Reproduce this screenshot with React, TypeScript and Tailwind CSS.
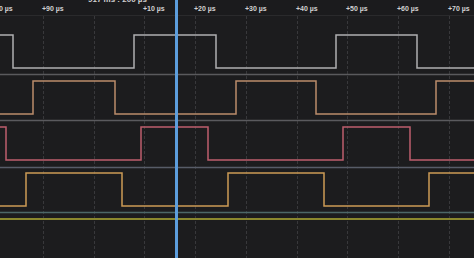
import React from 'react';

const ticks = [-8, 43, 94, 144, 195, 246, 297, 347, 398, 449];

const labels = [
  { x: -9, text: '+80 µs' },
  { x: 42, text: '+90 µs' },
  { x: 143, text: '+10 µs' },
  { x: 194, text: '+20 µs' },
  { x: 245, text: '+30 µs' },
  { x: 296, text: '+40 µs' },
  { x: 346, text: '+50 µs' },
  { x: 397, text: '+60 µs' },
  { x: 448, text: '+70 µs' },
];

// each signal: color, high y, low y, start level, edge x positions
const signals = [
  { color: '#afafb1', hi: 35, lo: 68, start: 1, edges: [13, 134, 216, 336, 417] },
  { color: '#bb8c6b', hi: 81, lo: 114, start: 0, edges: [33, 115, 236, 316, 436] },
  { color: '#bd5d6d', hi: 127, lo: 160, start: 1, edges: [6, 141, 208, 343, 410] },
  { color: '#cc9a55', hi: 173, lo: 206, start: 0, edges: [26, 122, 228, 324, 429] },
];

const separators = [
  { y: 74, color: '#5a5a5d' },
  { y: 120, color: '#5a5a5e' },
  { y: 167, color: '#575c68' },
  { y: 212, color: '#4c6768' },
];

function wavePath(s: (typeof signals)[number]) {
  let level = s.start;
  let d = `M0 ${level ? s.hi : s.lo}`;
  for (const x of s.edges) {
    d += ` H${x}`;
    level = level ? 0 : 1;
    d += ` V${level ? s.hi : s.lo}`;
  }
  d += ' H474';
  return d;
}

const App = () => {
  return (
    <div className="relative w-[474px] h-[258px] overflow-hidden bg-[#1c1c1e] font-['Liberation_Sans',Arial,sans-serif]">
      {/* time axis */}
      <div className="relative h-[16px] border-b border-[#2a2a2c] bg-[#1b1b1d]">
        <span className="absolute left-[88px] top-[-6px] text-[8px] font-bold text-[#cfcfcf] whitespace-nowrap">
          917 ms : 200 µs
        </span>
        {labels.map((l) => (
          <span
            key={l.text}
            className="absolute top-[5px] text-[7px] leading-[8px] font-bold text-[#d2d2d2] whitespace-nowrap"
            style={{ left: l.x }}
          >
            {l.text}
          </span>
        ))}
      </div>

      <svg width="474" height="242" viewBox="0 16 474 242" className="block">
        {ticks.map((x) => (
          <line
            key={x}
            x1={x + 0.5}
            x2={x + 0.5}
            y1={16}
            y2={258}
            stroke="#38383b"
            strokeWidth="1"
            strokeDasharray="3 2"
          />
        ))}
        {separators.map((s) => (
          <line key={s.y} x1={0} x2={474} y1={s.y + 0.5} y2={s.y + 0.5} stroke={s.color} strokeWidth="1.5" />
        ))}
        <line x1={0} x2={474} y1={219} y2={219} stroke="#8a882e" strokeWidth="2" />
        {signals.map((s) => (
          <path key={s.color} d={wavePath(s)} fill="none" stroke={s.color} strokeWidth="1.5" />
        ))}
      </svg>

      {/* cursor */}
      <div className="absolute top-0 bottom-0 left-[175px] w-[3px] bg-[#5c9ddc]" />
    </div>
  );
};

export default App;
